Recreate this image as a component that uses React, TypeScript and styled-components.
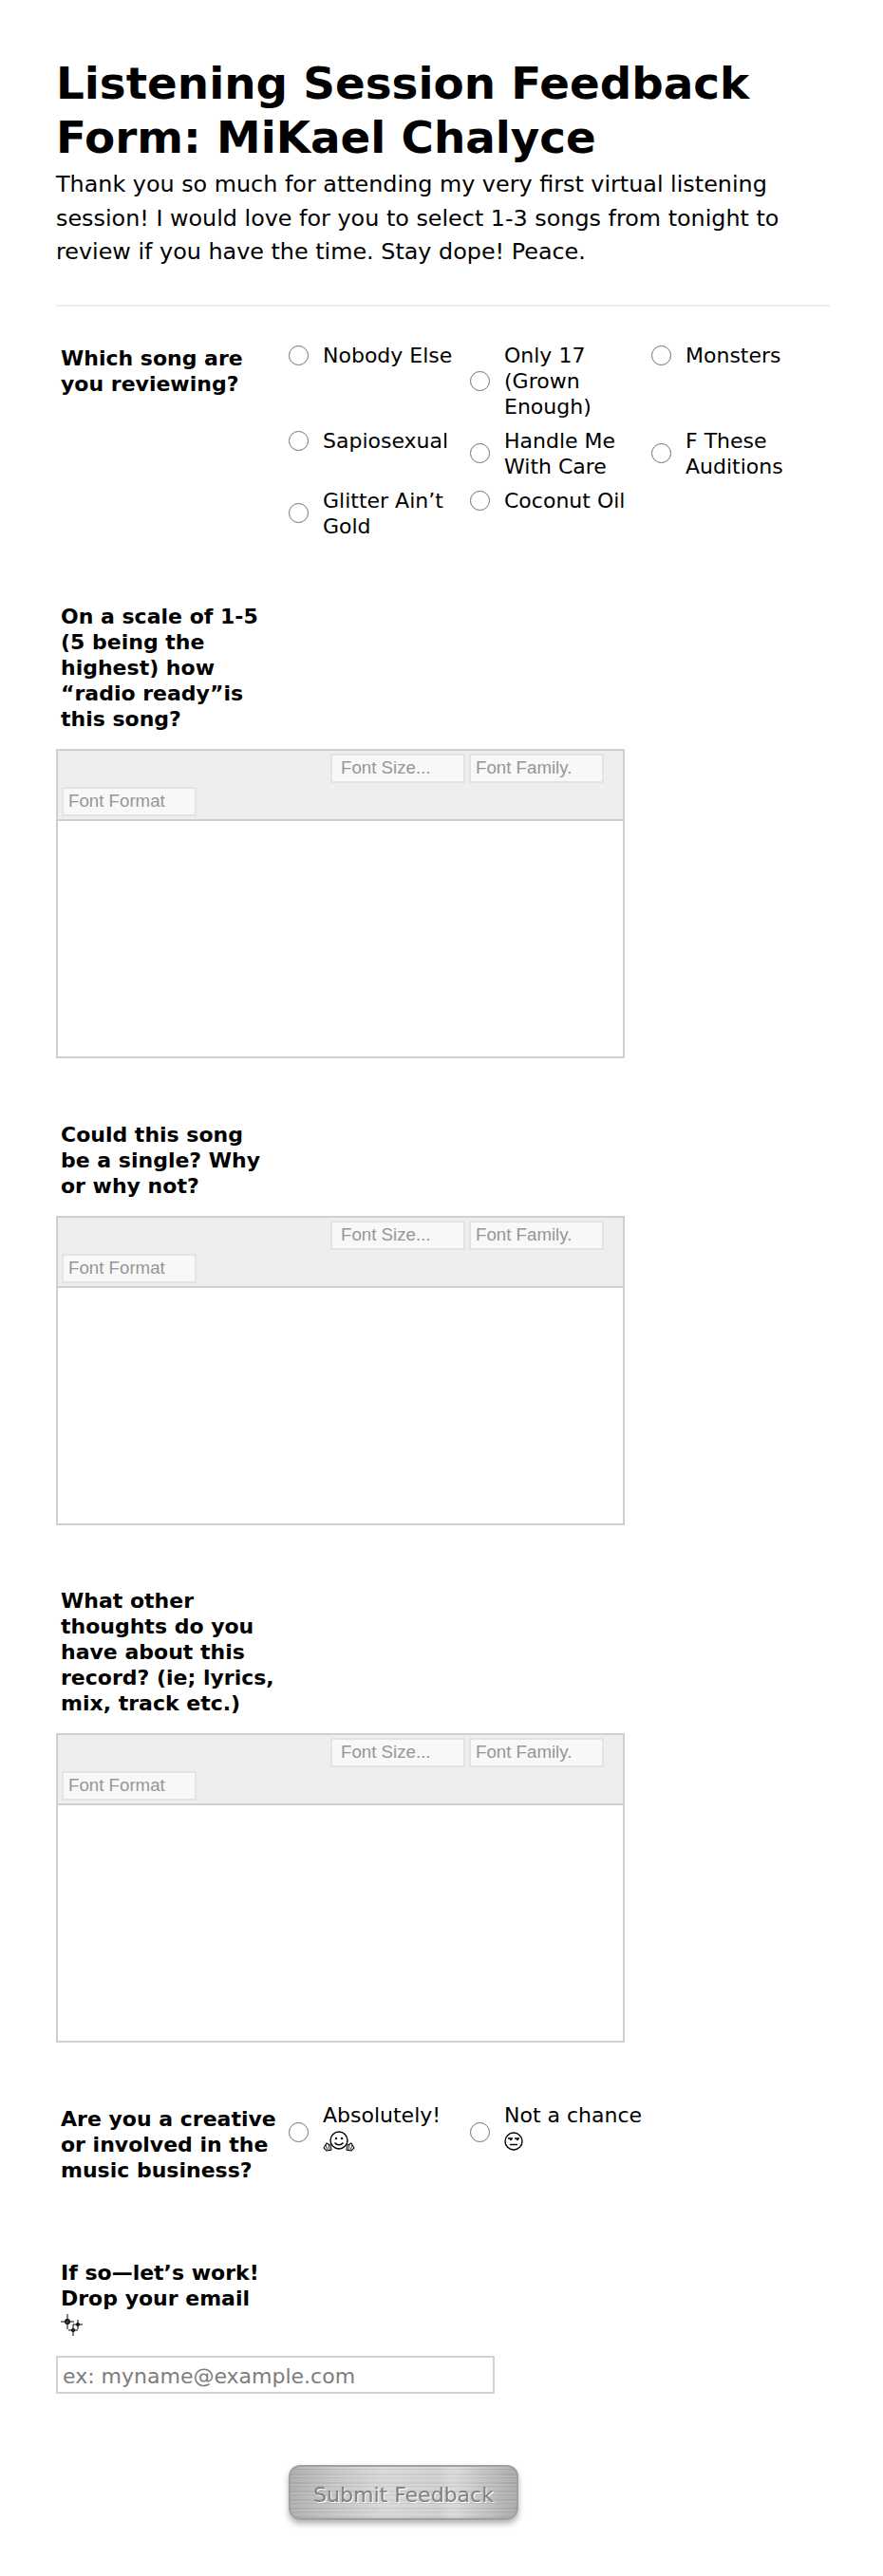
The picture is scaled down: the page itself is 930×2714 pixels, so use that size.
import React from "react";
import styled, { createGlobalStyle } from "styled-components";

const Global = createGlobalStyle`
  html, body { margin: 0; padding: 0; background: #fff; }
  body { font-family: "DejaVu Sans", Verdana, sans-serif; color: #000; }
`;

const Page = styled.main`
  width: 930px;
  height: 2714px;
  box-sizing: border-box;
  padding: 60px 56px 0 59px;
`;
const Title = styled.h1`
  margin: 0;
  font-size: 46.8px;
  line-height: 57px;
  font-weight: 700;
`;
const Intro = styled.p`
  margin: 3px 0 0;
  font-size: 23.85px;
  line-height: 35.5px;
`;
const Rule = styled.hr`
  margin: 37.5px 0 0;
  border: 0;
  height: 2px;
  background: #eeeeee;
`;
const Question = styled.section<{ $top: number }>`
  margin-top: ${(p) => p.$top}px;
`;
const Inline = styled.div`
  display: flex;
  align-items: flex-start;
`;
const Label = styled.label<{ $top?: number }>`
  display: block;
  flex: none;
  box-sizing: border-box;
  width: 244.5px;
  padding: ${(p) => p.$top ?? 0}px 9.5px 0 5px;
  font-size: 22px;
  line-height: 27px;
  font-weight: 700;
`;
const Options = styled.div<{ $cols: number }>`
  display: grid;
  flex: none;
  align-items: start;
  grid-template-columns: repeat(${(p) => p.$cols}, 191px);
`;
const Option = styled.label`
  display: flex;
  align-items: center;
  box-sizing: border-box;
  padding: 4.5px 0;
  font-size: 22px;
  line-height: 27px;
`;
const OptionText = styled.span`
  display: block;
  width: 150px;
`;
const Radio = styled.span`
  flex: none;
  box-sizing: border-box;
  width: 21px;
  height: 21px;
  margin-right: 15.5px;
  border: 1.5px solid #707070;
  border-radius: 50%;
  background: #fff;
`;
const Editor = styled.div`
  width: 599px;
  margin-top: 18px;
  border: 2px solid #cfcfcf;
  box-sizing: border-box;
`;
const Toolbar = styled.div`
  height: 74px;
  box-sizing: border-box;
  background: #eee;
  border-bottom: 2px solid #cfcfcf;
  padding: 3px 20px 0 4px;
  display: flex;
  flex-direction: column;
  gap: 4px;
`;
const ToolRow = styled.div<{ $end?: boolean }>`
  display: flex;
  gap: 4px;
  justify-content: ${(p) => (p.$end ? "flex-end" : "flex-start")};
`;
const Select = styled.div<{ $inset?: number }>`
  width: 142px;
  height: 31px;
  box-sizing: border-box;
  border: 2px solid #e3e3e3;
  background: #f8f8f8;
  color: #969696;
  font: 18.7px/25px "Liberation Sans", Arial, sans-serif;
  padding-left: ${(p) => p.$inset ?? 5}px;
`;
const Body = styled.div`
  height: 248px;
  background: #fff;
`;
const Email = styled.input`
  display: block;
  width: 462px;
  height: 40px;
  margin-top: 21px;
  box-sizing: border-box;
  border: 2px solid #d2d2d2;
  padding: 2px 5px 0;
  font: 22px "DejaVu Sans", sans-serif;
  outline: none;
  &::placeholder { color: #7d7d7d; opacity: 1; }
`;
const Actions = styled.div`
  display: flex;
  margin-top: 75px;
  padding-left: 245px;
`;
const Submit = styled.button`
  width: 242px;
  height: 58px;
  padding: 4px 0 0;
  box-sizing: border-box;
  border: 2px solid #a0a0a0;
  border-radius: 12px;
  font: 22px "DejaVu Sans", sans-serif;
  color: #808080;
  text-shadow: 1px 1px 0 #fff;
  box-shadow: 0 4px 6px rgba(0,0,0,.3);
  background:
    repeating-linear-gradient(180deg, rgba(255,255,255,.10) 0 2px, rgba(0,0,0,.05) 2px 3px, rgba(255,255,255,.04) 3px 7px, rgba(0,0,0,.04) 7px 9px),
    linear-gradient(90deg, #aeaeae 0%, #c4c4c4 18%, #d8d8d8 42%, #cfcfcf 65%, #dadada 72%, #aaaaaa 100%);
`;
const Glyph = styled.svg<{ $top: number; $bottom: number }>`
  display: block;
  margin: ${(p) => p.$top}px 0 ${(p) => p.$bottom}px;
  fill: none;
  stroke: #000;
  stroke-width: 1.4;
`;

const HugFace = () => (
  <Glyph $top={3} $bottom={8} width="36" height="24" viewBox="0 0 36 24" aria-label="🤗">
    <circle cx="17" cy="10" r="9" />
    <circle cx="14" cy="8" r="1.2" fill="#000" stroke="none" />
    <circle cx="20" cy="8" r="1.2" fill="#000" stroke="none" />
    <path d="M12.500 12.500c2.500 3 6.500 3 9 0" />
    <path d="M1 18l3-5 4 2 1 5-5 1zM33 18l-3-5-4 2-1 5 5 1z" strokeWidth="1.1" />
    <path d="M3 15l2 5M6 14l1 6M31 15l-2 5M28 14l-1 6" strokeWidth=".8" />
  </Glyph>
);
const UnamusedFace = () => (
  <Glyph $top={3} $bottom={8} width="20" height="24" viewBox="0 0 20 24" aria-label="😒">
    <circle cx="10" cy="11" r="9" />
    <path d="M4 8h5M11 8h5" strokeWidth="1.3" />
    <circle cx="7" cy="9.200" r="1.100" fill="#000" stroke="none" />
    <circle cx="14" cy="9.200" r="1.100" fill="#000" stroke="none" />
    <path d="M6 14.500h8" />
  </Glyph>
);
const Sparkles = () => (
  <Glyph $top={0} $bottom={0} width="24" height="26" viewBox="0 0 24 26" aria-label="✨" strokeWidth="1">
    <path d="M7 3v16M0 11h14" strokeWidth="1" />
    <circle cx="7" cy="11" r="2.200" strokeWidth="1.400" />
    <path d="M18 9v10M13 14h10" strokeWidth="1" />
    <circle cx="18" cy="14" r="1.300" strokeWidth="1.200" />
    <path d="M13 14v12M8 20h10" strokeWidth="1" />
    <circle cx="13" cy="20" r="1.500" strokeWidth="1.200" />
  </Glyph>
);

const RichEditor = () => (
  <Editor>
    <Toolbar>
      <ToolRow $end>
        <Select $inset={9}>Font Size...</Select>
        <Select>Font Family.</Select>
      </ToolRow>
      <ToolRow>
        <Select>Font Format</Select>
      </ToolRow>
    </Toolbar>
    <Body />
  </Editor>
);

const songs = [
  "Nobody Else", "Only 17 (Grown Enough)", "Monsters",
  "Sapiosexual", "Handle Me With Care", "F These Auditions",
  "Glitter Ain’t Gold", "Coconut Oil",
];

export default function App() {
  return (
    <Page>
      <Global />
      <Title>Listening Session Feedback Form: MiKael Chalyce</Title>
      <Intro>
        Thank you so much for attending my very first virtual listening session! I would love for you to select 1-3 songs from tonight to review if you have the time. Stay dope! Peace.
      </Intro>
      <Rule />
      <Question $top={33}>
        <Inline>
          <Label $top={8}>Which song are you reviewing?</Label>
          <Options $cols={3}>
            {songs.map((s) => (
              <Option key={s}><Radio /><OptionText>{s}</OptionText></Option>
            ))}
          </Options>
        </Inline>
      </Question>
      <Question $top={64}>
        <Label>On a scale of 1-5 (5 being the highest) how “radio ready”is this song?</Label>
        <RichEditor />
      </Question>
      <Question $top={67}>
        <Label>Could this song be a single? Why or why not?</Label>
        <RichEditor />
      </Question>
      <Question $top={66}>
        <Label>What other thoughts do you have about this record? (ie; lyrics, mix, track etc.)</Label>
        <RichEditor />
      </Question>
      <Question $top={58.5}>
        <Inline>
          <Label $top={8.5}>Are you a creative or involved in the music business?</Label>
          <Options $cols={2}>
            <Option><Radio /><OptionText>Absolutely!<HugFace /></OptionText></Option>
            <Option><Radio /><OptionText>Not a chance<UnamusedFace /></OptionText></Option>
          </Options>
        </Inline>
      </Question>
      <Question $top={81}>
        <Label>If so—let’s work! Drop your email <Sparkles /></Label>
        <Email placeholder="ex: myname@example.com" />
      </Question>
      <Actions><Submit type="button">Submit Feedback</Submit></Actions>
    </Page>
  );
}
